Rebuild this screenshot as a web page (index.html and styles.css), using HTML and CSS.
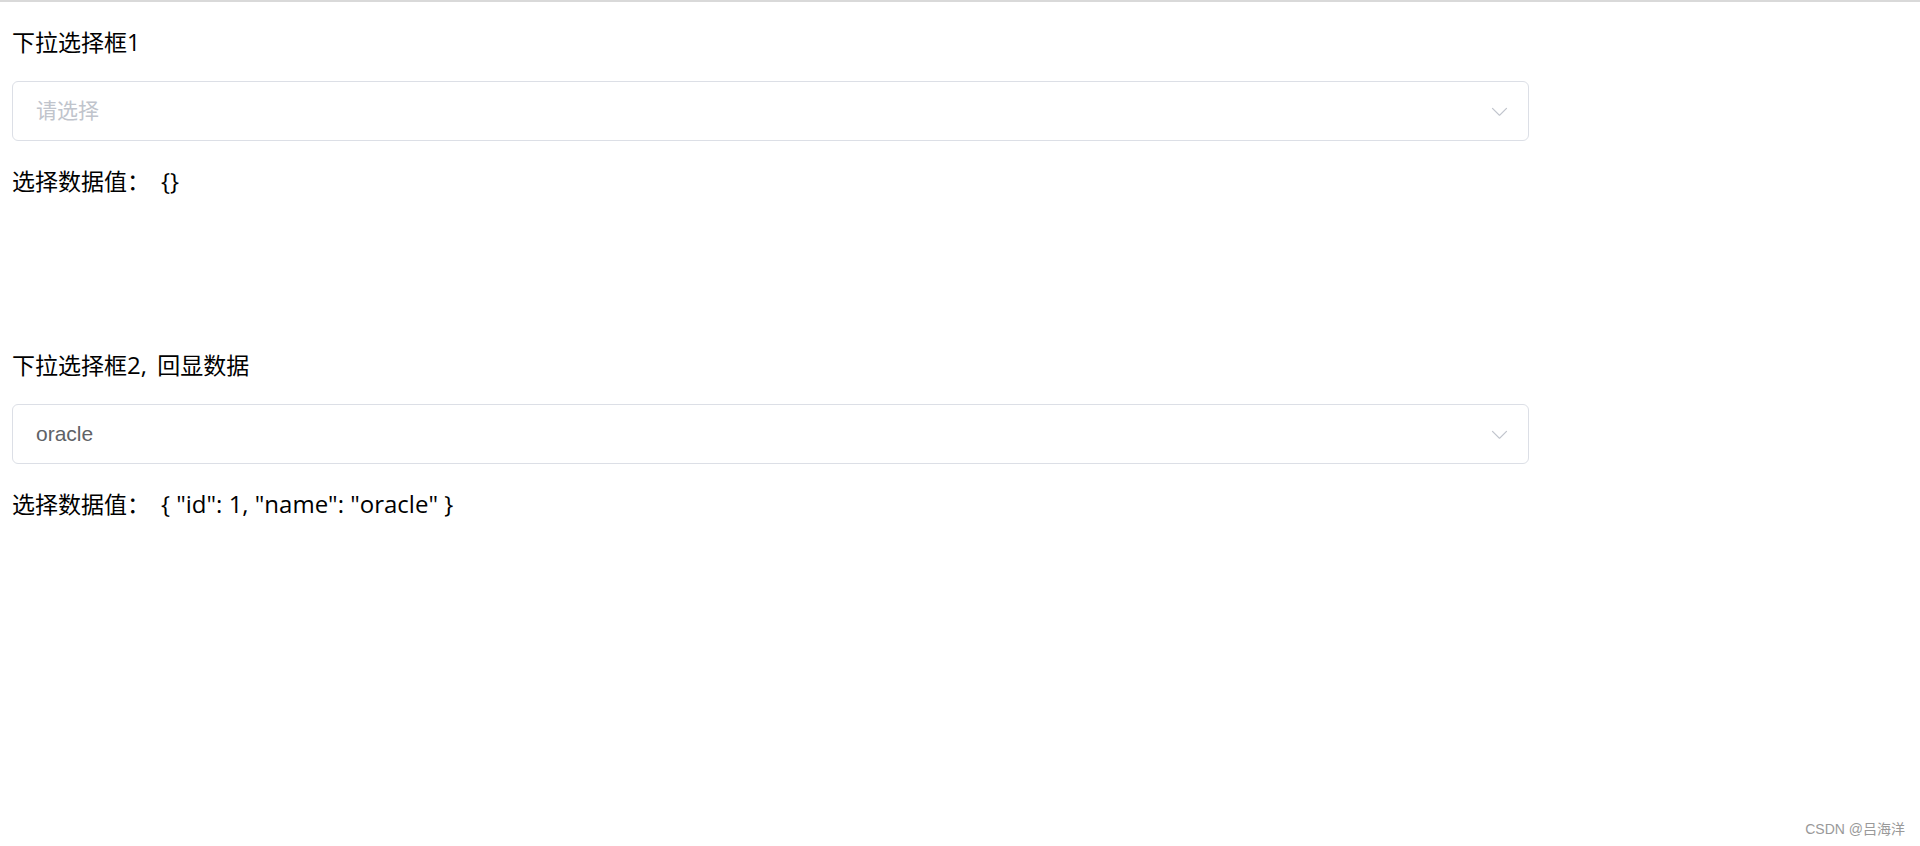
FILE: index.html
```html
<!DOCTYPE html>
<html lang="zh-CN">
<head>
<meta charset="utf-8">
<title>下拉选择框</title>
<link rel="stylesheet" href="styles.css">
</head>
<body>
<div class="topline"></div>
<main class="page">
  <section class="demo demo-first">
    <div class="title">下拉选择框1</div>
    <div class="select">
      <span class="placeholder">请选择</span>
      <svg class="arrow" viewBox="0 0 1024 1024" aria-hidden="true"><path d="M831.872 340.864 512 652.672 192.128 340.864a30.592 30.592 0 0 0-42.752 0 29.12 29.12 0 0 0 0 41.6L489.664 714.24a32 32 0 0 0 44.672 0l340.288-331.712a29.12 29.12 0 0 0 0-41.728 30.592 30.592 0 0 0-42.752 0z"/></svg>
    </div>
    <div class="value">选择数据值：<span class="json">{}</span></div>
  </section>
  <section class="demo demo-second">
    <div class="title">下拉选择框<span class="latin">2, </span>回显数据</div>
    <div class="select">
      <span class="selected">oracle</span>
      <svg class="arrow" viewBox="0 0 1024 1024" aria-hidden="true"><path d="M831.872 340.864 512 652.672 192.128 340.864a30.592 30.592 0 0 0-42.752 0 29.12 29.12 0 0 0 0 41.6L489.664 714.24a32 32 0 0 0 44.672 0l340.288-331.712a29.12 29.12 0 0 0 0-41.728 30.592 30.592 0 0 0-42.752 0z"/></svg>
    </div>
    <div class="value">选择数据值：<span class="json">{ "id": 1, "name": "oracle" }</span></div>
  </section>
</main>
<div class="watermark">CSDN @吕海洋</div>
</body>
</html>
```

FILE: styles.css
```css
html, body {
  margin: 0;
  padding: 0;
  background: #ffffff;
}

body {
  font-family: "Open Sans", "Noto Sans CJK SC", sans-serif;
  color: #000000;
  height: 846px;
  overflow: hidden;
  position: relative;
}

.topline {
  height: 2px;
  background: #d9d9d9;
}

.page {
  padding: 0 12px;
}

.demo-first {
  padding-top: 24px;
}

.demo-second {
  padding-top: 152px;
}

.title {
  font-size: 23px;
  line-height: 32px;
}

.latin {
  font-size: 24px;
  word-spacing: 4px;
}

.json {
  font-size: 24px;
  margin-left: 11px;
}

.select {
  box-sizing: border-box;
  width: 1517px;
  height: 60px;
  margin-top: 23px;
  border: 1px solid #dcdfe6;
  border-radius: 6px;
  display: flex;
  align-items: center;
  justify-content: space-between;
  padding: 0 18px 0 23px;
  font-family: "Liberation Sans", "Noto Sans CJK SC", sans-serif;
  font-size: 21px;
}

.placeholder {
  color: #c0c4cc;
  margin-bottom: 4px;
}

.selected {
  color: #606266;
}

.arrow {
  width: 21px;
  height: 21px;
  fill: #c0c4cc;
}

.value {
  margin-top: 24px;
  font-size: 23px;
  line-height: 32px;
}

.watermark {
  position: absolute;
  right: 15px;
  bottom: 8px;
  font-family: "Liberation Sans", "Noto Sans CJK SC", sans-serif;
  font-size: 14px;
  color: #999999;
}
```
